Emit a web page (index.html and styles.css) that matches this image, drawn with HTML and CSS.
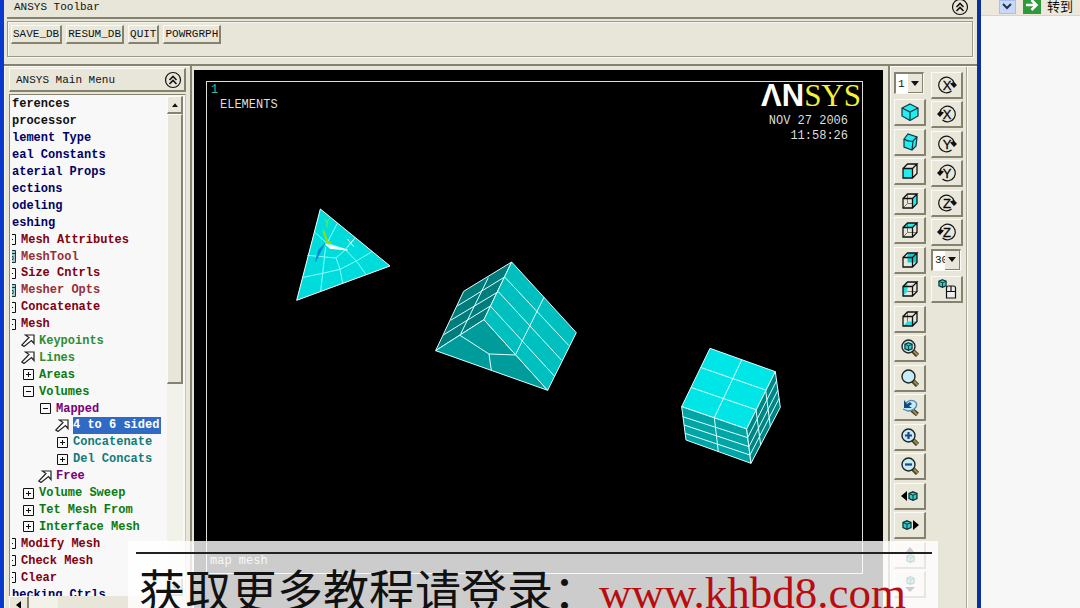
FILE: index.html
```
<!DOCTYPE html>
<html lang="zh-CN">

<head>
    <meta charset="UTF-8">
    <meta name="viewport" content="width=device-width, initial-scale=1.0">
    <title>ANSYS</title>
    <link rel="stylesheet" href="styles.css">
</head>

<body>
<svg class="defs" aria-hidden="true">
    <symbol id="chevrons" viewBox="0 0 18 18">
        <circle cx="9" cy="9" r="7.5" fill="none" stroke="#111" stroke-width="1.2"/>
        <path d="M5.5 9 9 5.5 12.5 9M5.5 13 9 9.5 12.5 13" fill="none" stroke="#111" stroke-width="1.6"/>
    </symbol>
    <symbol id="plus" viewBox="0 0 11 11">
        <path d="M.5.5h10v10H.5zM3 5.5h5M5.5 3v5" fill="none" stroke="#111"/>
    </symbol>
    <symbol id="minus" viewBox="0 0 11 11">
        <path d="M.5.5h10v10H.5zM3 5.5h5" fill="none" stroke="#111"/>
    </symbol>
    <symbol id="dialog" viewBox="0 0 11 13">
        <path d="M.5.5h10v12H.5z" fill="#9cc" stroke="#233"/>
        <path d="M1 3.5h9M3 6.5h5v3H3z" fill="#fff" stroke="#233"/>
    </symbol>
    <symbol id="pick" viewBox="0 0 14 13">
        <path d="M4.500 1h8.500v8.500l-2.500-3L3 12.500.8 11 8 3.500z" fill="#fff" stroke="#222" stroke-width="1.200"/>
    </symbol>
    <symbol id="box" viewBox="0 0 18 18">
        <path d="M2 6.5h9.5V16H2zM2 6.5 6.5 2H16l-4.500 4.500M16 2v9.500L11.500 16" fill="none" stroke="#111" stroke-width="1.3"/>
    </symbol>
    <symbol id="mini" viewBox="0 0 10 10">
        <path d="M5 .8 9 2.500v5L5 9.300 1 7.500v-5z" fill="#3cc" stroke="#133" stroke-width="1.3"/>
        <path d="M1 2.500 5 4.300l4-1.800M5 4.300v5" fill="none" stroke="#133"/>
    </symbol>
    <symbol id="lens" viewBox="0 0 18 18">
        <path d="m12 12 4.500 4.500" stroke="#443c20" stroke-width="4.500"/>
        <path d="m12.500 12 4 4" stroke="#a08c50" stroke-width="2"/>
        <circle cx="7.5" cy="7.5" r="6.500" fill="#c4ecf4" stroke="#222" stroke-width="1.4"/>
    </symbol>
    <symbol id="turn" viewBox="0 0 20 20">
        <path d="M14.500 16A7.800 7.800 0 1 1 17 8" fill="none" stroke="#111" stroke-width="1.2"/>
        <path d="M13 8.500 17 7l3 3-3 3z" fill="#111"/>
    </symbol>
    <symbol id="down" viewBox="0 0 8 5">
        <path d="M0 0h8L4 5z" fill="#111"/>
    </symbol>
</svg>

<div class="screen">
    <div class="app">
        <div class="bar">
            <span>ANSYS Toolbar</span>
            <button class="round" aria-label="收起工具栏"><svg><use href="#chevrons"/></svg></button>
        </div>
        <div class="toolbar">
            <button>SAVE_DB</button>
            <button>RESUM_DB</button>
            <button>QUIT</button>
            <button>POWRGRPH</button>
        </div>

        <div class="main">
            <div class="menu">
                <div class="menu-title">
                    <span>ANSYS Main Menu</span>
                    <button class="round" aria-label="收起菜单"><svg><use href="#chevrons"/></svg></button>
                </div>
                <div class="menu-body">
                    <ul class="tree">
                        <li class="black">ferences</li>
                        <li class="black">processor</li>
                        <li class="navy">lement Type</li>
                        <li class="navy">eal Constants</li>
                        <li class="navy">aterial Props</li>
                        <li class="navy">ections</li>
                        <li class="navy">odeling</li>
                        <li class="navy">eshing</li>
                        <li class="l2"><svg><use href="#plus"/></svg>Mesh Attributes</li>
                        <li class="l2 light"><svg><use href="#dialog"/></svg>MeshTool</li>
                        <li class="l2"><svg><use href="#plus"/></svg>Size Cntrls</li>
                        <li class="l2 light"><svg><use href="#dialog"/></svg>Mesher Opts</li>
                        <li class="l2"><svg><use href="#plus"/></svg>Concatenate</li>
                        <li class="l2"><svg><use href="#minus"/></svg>Mesh</li>
                        <li class="l3 light"><svg class="pick"><use href="#pick"/></svg>Keypoints</li>
                        <li class="l3 light"><svg class="pick"><use href="#pick"/></svg>Lines</li>
                        <li class="l3"><svg><use href="#plus"/></svg>Areas</li>
                        <li class="l3"><svg><use href="#minus"/></svg>Volumes</li>
                        <li class="l4"><svg><use href="#minus"/></svg>Mapped</li>
                        <li class="l5"><svg class="pick"><use href="#pick"/></svg><span class="selected">4 to 6 sided</span></li>
                        <li class="l5"><svg><use href="#plus"/></svg>Concatenate</li>
                        <li class="l5"><svg><use href="#plus"/></svg>Del Concats</li>
                        <li class="l4"><svg class="pick"><use href="#pick"/></svg>Free</li>
                        <li class="l3"><svg><use href="#plus"/></svg>Volume Sweep</li>
                        <li class="l3"><svg><use href="#plus"/></svg>Tet Mesh From</li>
                        <li class="l3"><svg><use href="#plus"/></svg>Interface Mesh</li>
                        <li class="l2"><svg><use href="#plus"/></svg>Modify Mesh</li>
                        <li class="l2"><svg><use href="#plus"/></svg>Check Mesh</li>
                        <li class="l2"><svg><use href="#plus"/></svg>Clear</li>
                        <li class="navy">hecking Ctrls</li>
                    </ul>
                    <div class="vscroll">
                        <button aria-label="向上"><svg class="up"><use href="#down"/></svg></button>
                        <div class="thumb"></div>
                        <button class="last" aria-label="向下"><svg><use href="#down"/></svg></button>
                    </div>
                </div>
                <div class="hscroll">
                    <button aria-label="向左"><svg viewBox="0 0 5 8"><path d="M5 0v8L0 4z"/></svg></button>
                    <div class="thumb"></div>
                </div>
            </div>

            <div class="graphics">
                <div class="frame">
                    <div class="plot-name">
                        <span class="num">1</span>
                        <span class="type">ELEMENTS</span>
                    </div>
                    <div class="stamp">
                        <div class="logo"><b>ΛN</b><i>SYS</i></div>
                        <span>NOV 27 2006</span>
                        <span>11:58:26</span>
                    </div>
                    <div class="plot-title">map mesh</div>
                    <svg class="model" viewBox="207 82 655 491" preserveAspectRatio="xMinYMin meet">
                        <!-- tetrahedron -->
                        <g transform="translate(280 190) scale(.3333)" fill="none" stroke="#dff" stroke-width="3">
                            <path d="M121 57 330 228 50 331z" fill="#00dcdc" stroke="#fff"/>
                            <path d="M106 128 141 160 202 180M172 100 141 160M226 143 195 180 168 204 82 196M195 178 229 213 257 252M278 184 229 213 180 238 128 250 70 262M168 204 180 238 188 280M137 170 128 250 122 303" stroke="#8ff"/>
                            <path d="M134 160 106 216 116 180z" fill="#08c" stroke="#0890d8"/>
                            <path d="M137 163 202 180 150 175z" fill="#fff" stroke="#fff"/>
                            <path d="M130 122 143 158 154 158" stroke="#9d0" stroke-width="6"/>
                            <path d="M134 86 141 96 149 84M141 96V112" stroke="#7e3"/>
                            <path d="M202 147 222 171M222 147 202 171"/>
                        </g>
                        <!-- prism -->
                        <g transform="translate(280 190) scale(.3333)" stroke="#dff" stroke-width="3" stroke-linejoin="round">
                            <path d="M695 216 551 304 467 482 612 389z" fill="#007c7c"/>
                            <path d="M467 482 612 389 803 601z" fill="#009b9b"/>
                            <path d="M695 216 889 428 803 601 612 389z" fill="#00bfbf"/>
                            <path d="M674 261 866 466M655 305 845 511M631 348 823 558M792 322 706 495M625 263 540 436M674 261 532 348M655 305 512 391M631 348 490 435M540 436 627 492 706 495M627 492 634 541" fill="none"/>
                        </g>
                        <!-- brick -->
                        <g transform="translate(660 330) scale(.3333)" stroke="#dff" stroke-width="3" stroke-linejoin="round">
                            <path d="M150 55 346 125 260 297 65 230z" fill="#00e6e6"/>
                            <path d="M65 230 260 297 273 400 78 330z" fill="#00a5a5"/>
                            <path d="M346 125 260 297 273 400 361 232z" fill="#008585"/>
                            <path d="M245 90 163 263 175 365M124 113 317 180 331 290M95 173 288 239 302 345M68 260 263 323 350 152M72 285 267 350 354 180M75 310 270 375 357 206" fill="none"/>
                        </g>
                    </svg>
                </div>
            </div>

            <div class="tools">
                <div class="col">
                    <div class="combo">
                        <select aria-label="窗口"><option>1</option></select>
                        <span><svg><use href="#down"/></svg></span>
                    </div>
                    <div class="views">
                        <button aria-label="Isometric"><svg viewBox="0 0 18 18"><path d="M9 1 17 5v8l-8 4.500L1 13V5z" fill="#2ee" stroke="#134" stroke-width="1.2"/><path d="M1 5 9 9l8-4M9 9v8" fill="none" stroke="#134" stroke-width="1.2"/></svg></button>
                        <button aria-label="Oblique"><svg viewBox="0 0 18 18"><path d="M3 6 7 1l9 3-1 9-4 4-8-3z" fill="#2ee" stroke="#134" stroke-width="1.2"/><path d="M3 6q4 3 9 2l4-4M12 8l-1 9" fill="none" stroke="#134" stroke-width="1.2"/></svg></button>
                        <button aria-label="Front"><svg viewBox="0 0 18 18"><path d="M2 6.500h9.500V16H2z" fill="#2ee"/><use href="#box"/></svg></button>
                        <button aria-label="Right"><svg viewBox="0 0 18 18"><path d="M11.500 6.500 16 2v9.500L11.500 16z" fill="#2ee"/><path d="M6.500 3v8.500H11M6.500 11.500 2 16" fill="none" stroke="#777"/><use href="#box"/></svg></button>
                        <button aria-label="Top"><svg viewBox="0 0 18 18"><path d="M2 6.500 6.500 2H16l-4.500 4.500z" fill="#2ee"/><path d="M6.500 3v8.500H16M6.500 11.500 2 16" fill="none" stroke="#777"/><use href="#box"/></svg></button>
                        <button aria-label="Back"><svg viewBox="0 0 18 18"><path d="M6.500 2H16v9.500H6.500z" fill="#1cc"/><use href="#box"/></svg></button>
                        <button aria-label="Left"><svg viewBox="0 0 18 18"><path d="M2 6.500 6.500 2v9.500L2 16z" fill="#2dd"/><path d="M6.500 11.500H16" stroke="#777"/><use href="#box"/></svg></button>
                        <button aria-label="Bottom"><svg viewBox="0 0 18 18"><path d="M2 16l4.500-4.500H16L11.500 16z" fill="#2dd"/><path d="M6.500 3v8.500" stroke="#777"/><use href="#box"/></svg></button>
                        <button aria-label="Fit"><svg viewBox="0 0 18 18"><use href="#lens"/><use href="#mini" x="3" y="3" width="9" height="9"/></svg></button>
                        <button aria-label="Zoom"><svg viewBox="0 0 18 18"><use href="#lens"/></svg></button>
                        <button aria-label="Zoom back"><svg viewBox="0 0 18 18"><path d="m11 12 5.500 4.500" stroke="#443c20" stroke-width="4.500"/><path d="m12 12.500 4 4" stroke="#a08c50" stroke-width="2"/><path d="M5 5Q9 1 13 3t2 6q-3 4-8 4l-5-2" fill="#c4ecf4" stroke="#58a" stroke-width="1.3"/><path d="M3 2v8h8L8 8l3-2-2-2-3 2z" fill="#124a84"/></svg></button>
                        <button aria-label="Zoom in"><svg viewBox="0 0 18 18"><use href="#lens"/><path d="M4 7.500h7M7.500 4v7" stroke="#248" stroke-width="2.2"/></svg></button>
                        <button aria-label="Zoom out"><svg viewBox="0 0 18 18"><use href="#lens"/><path d="M4 7.500h7" stroke="#248" stroke-width="2.2"/></svg></button>
                        <button aria-label="Pan left"><svg viewBox="0 0 18 18"><path d="M6 4v10L0 9z"/><use href="#mini" x="7" y="4" width="10" height="10"/></svg></button>
                        <button aria-label="Pan right"><svg viewBox="0 0 18 18"><path d="M12 4v10l6-5z"/><use href="#mini" x="1" y="4" width="10" height="10"/></svg></button>
                        <button aria-label="Pan up"><svg viewBox="0 0 18 18"><path d="M4 7h10L9 1z"/><use href="#mini" x="5" y="8" width="9" height="9"/></svg></button>
                        <button aria-label="Pan down"><svg viewBox="0 0 18 18"><path d="M4 12h10l-5 5z"/><use href="#mini" x="5" y="1" width="9" height="9"/></svg></button>
                    </div>
                </div>
                <div class="col turns">
                    <button aria-label="+X"><svg viewBox="0 0 20 20"><use href="#turn"/><text x="10" y="15">X</text></svg></button>
                    <button aria-label="-X"><svg viewBox="0 0 20 20"><use href="#turn" transform="matrix(-1 0 0 1 20 0)"/><text x="10" y="15">X</text></svg></button>
                    <button aria-label="+Y"><svg viewBox="0 0 20 20"><use href="#turn"/><text x="10" y="15">Y</text></svg></button>
                    <button aria-label="-Y"><svg viewBox="0 0 20 20"><use href="#turn" transform="matrix(-1 0 0 1 20 0)"/><text x="10" y="15">Y</text></svg></button>
                    <button aria-label="+Z"><svg viewBox="0 0 20 20"><use href="#turn"/><text x="10" y="15">Z</text></svg></button>
                    <button aria-label="-Z"><svg viewBox="0 0 20 20"><use href="#turn" transform="matrix(-1 0 0 1 20 0)"/><text x="10" y="15">Z</text></svg></button>
                    <div class="combo">
                        <select aria-label="角度"><option>30</option></select>
                        <span><svg><use href="#down"/></svg></span>
                    </div>
                    <button class="mouse" aria-label="Dynamic"><svg viewBox="0 0 20 20"><use href="#mini" x="1" y="0" width="9" height="9"/><path d="M9.500 9q0-2 2-2h5q2 0 2 2v10h-9zM9.500 12.500h9M14 7v5.500" fill="#eee" stroke="#111" stroke-width="1.2"/></svg></button>
                </div>
            </div>
        </div>
    </div>

    <div class="browser">
        <div class="address">
            <button class="drop" aria-label="地址列表"><svg viewBox="0 0 10 8"><path d="m1 1 4 4 4-4" fill="none" stroke="#235" stroke-width="2"/></svg></button>
            <button class="go"><svg viewBox="0 0 18 16"><path d="M0 0h18v16H0z" fill="#2f9a3a"/><path d="M3 7h10M8.500 2l5 5-5 5" fill="none" stroke="#fff" stroke-width="2.500"/></svg>转到</button>
        </div>
    </div>

    <div class="banner">
        <p>获取更多教程请登录：<a href="#">www.khbd8.com</a></p>
    </div>
</div>
</body>

</html>
```
FILE: styles.css
```
html,
body {
    height: 100%;
    margin: 0;
    padding: 0;
    overflow: hidden;
}

* {
    box-sizing: border-box;
}

body {
    font-family: "Liberation Mono", "Noto Sans CJK SC", monospace;
    font-size: 11px;
    color: #111;
    background: #f7f7f7;
}

button {
    margin: 0;
    padding: 0;
    font: inherit;
    color: #111;
    background: #e9e7da;
    border: 1px solid #fbfaf4;
    border-right: 2px solid #85826f;
    border-bottom: 2px solid #85826f;
}

svg {
    display: block;
    flex: none;
}

.defs {
    position: absolute;
    width: 0;
    height: 0;
}

.screen {
    position: relative;
    display: flex;
    height: 100%;
    overflow: hidden;
}

.app {
    flex: 1;
    min-width: 0;
    display: flex;
    flex-direction: column;
    background: #e8e6d9;
    border-left: 4px solid #0838cc;
    border-right: 4px solid #0a309c;
}

.bar {
    display: flex;
    align-items: center;
    justify-content: space-between;
    flex: none;
    height: 19px;
    margin: 0 4px 2px 3px;
    padding: 0 4px 3px 7px;
    border-bottom: 2px solid #85826f;
}

.round {
    width: 18px;
    height: 18px;
    border: none;
    background: none;
}

.round svg {
    width: 18px;
    height: 18px;
}

.toolbar {
    display: flex;
    align-items: flex-start;
    gap: 4px;
    flex: none;
    height: 36px;
    margin: 0 4px 7px 3px;
    padding: 3px;
    border: 1px solid #9a9887;
    box-shadow: inset 1px 1px #f8f7f0, 1px 1px #f8f7f0;
}

.toolbar button {
    height: 19px;
    padding: 0 1px;
}

.main {
    display: flex;
    flex: 1;
    min-height: 0;
    border-top: 2px solid #85826f;
}

/* left menu */
.menu {
    display: flex;
    flex-direction: column;
    flex: none;
    width: 188px;
    padding: 2px 4px 0 5px;
    border-right: 2px solid #85826f;
    box-shadow: inset 1px 1px #fbfaf4;
}

.menu-title {
    display: flex;
    align-items: center;
    justify-content: space-between;
    flex: none;
    height: 24px;
    margin-bottom: 2px;
    padding: 0 2px 0 6px;
    border: 1px solid #fbfaf4;
    border-right: 2px solid #85826f;
    border-bottom: 2px solid #85826f;
}

.menu-body {
    display: flex;
    flex: 1;
    min-height: 0;
    padding: 1px 2px 0;
    border-top: 1px solid #85826f;
    border-left: 1px solid #85826f;
    border-right: 1px solid #c8c5b4;
    background: #f8f8f8;
    overflow: hidden;
}

.tree {
    display: grid;
    grid-template-rows: repeat(30, 1fr);
    flex: 1;
    height: 507px;
    margin: 0;
    padding: 0;
    list-style: none;
    font-size: 12px;
    font-weight: bold;
    color: #800010;
    overflow: hidden;
}

.tree li {
    display: flex;
    align-items: center;
    gap: 5px;
    white-space: pre;
}

.tree svg {
    width: 11px;
    height: 11px;
}

.tree .l2 svg {
    margin-left: -7px;
}

.tree .l2.light svg {
    height: 13px;
}

.tree svg.pick {
    width: 14px;
    height: 13px;
    margin: 0 -1px 0 -2px;
}

.tree .black {
    color: #111;
}

.tree .navy {
    color: #000064;
}

.tree .l2.light {
    color: #963038;
}

.tree .l3 {
    padding-left: 11px;
    color: #0a7a10;
}

.tree .l3.light {
    color: #2f8c34;
}

.tree .l4 {
    padding-left: 28px;
    color: #780078;
}

.tree .l5 {
    padding-left: 45px;
    color: #107c7c;
}

.tree .selected {
    padding-right: 2px;
    line-height: 17px;
    color: #fff;
    background: #316ac5;
}

.vscroll {
    display: flex;
    flex-direction: column;
    flex: none;
    width: 16px;
    background: #f3f2ea;
}

.vscroll button,
.hscroll button {
    display: flex;
    align-items: center;
    justify-content: center;
    flex: none;
    width: 16px;
    height: 18px;
}

.vscroll svg {
    width: 6px;
    height: 4px;
}

.up {
    transform: rotate(180deg);
}

.vscroll .thumb {
    flex: 0 0 54%;
    border: 1px solid #fbfaf4;
    border-right: 2px solid #85826f;
    border-bottom: 2px solid #85826f;
    background: #e8e6d9;
}

.vscroll .last {
    margin-top: auto;
}

.hscroll {
    display: flex;
    flex: none;
    gap: 29px;
    height: 12px;
    background: #f3f2ea;
}

.hscroll button {
    width: 20px;
}

.hscroll svg {
    width: 5px;
    height: 8px;
}

.hscroll .thumb {
    flex: 1;
    background: #e8e6d9;
}

/* graphics window */
.graphics {
    flex: 1;
    min-width: 0;
    margin: 4px 5px 0 2px;
    padding: 11px 20px 34px 12px;
    background: #000;
}

.frame {
    position: relative;
    display: grid;
    grid-template-columns: 1fr auto;
    grid-template-rows: 1fr auto;
    height: 100%;
    border: 1px solid #ddd;
    font-size: 12px;
    line-height: 15px;
    color: #ddd;
}

.plot-name {
    display: flex;
    flex-direction: column;
    padding: 1px 4px;
}

.num {
    color: #3fb8a0;
}

.type {
    padding-left: 9px;
}

.stamp {
    display: flex;
    flex-direction: column;
    align-items: flex-end;
    padding-right: 14px;
}

.logo {
    display: flex;
    align-items: baseline;
    margin-right: -13px;
    height: 32px;
    color: #fff;
}

.logo b {
    font: bold 31px/28px "Liberation Sans", sans-serif;
}

.logo i {
    font: normal 31px/28px "Liberation Serif", serif;
    color: #f4f03c;
}

.plot-title {
    padding: 0 3px 4px;
}

.model {
    position: absolute;
    top: 0;
    left: 0;
    width: 100%;
    height: 100%;
}

/* view buttons */
.tools {
    display: flex;
    align-items: flex-start;
    gap: 5px;
    flex: none;
    width: 89px;
    padding: 6px 11px 0 4px;
    border-left: 2px solid #85826f;
    background: linear-gradient(to right, transparent 76px, #aaa898 76px, #aaa898 77px, #fbfaf4 77px, #fbfaf4 78px, transparent 78px);
    box-shadow: inset 1px 1px #fbfaf4;
}

.col {
    display: flex;
    flex-direction: column;
    flex: none;
    width: 32px;
}

.views,
.turns {
    display: flex;
    flex-direction: column;
    justify-content: space-between;
}

.views {
    height: 499px;
    margin-top: 5px;
}

.turns {
    height: 231px;
}

.tools button {
    display: flex;
    align-items: center;
    justify-content: center;
    flex: none;
    width: 32px;
    height: 27px;
}

.tools .mouse {
    margin-top: 3px;
}

.tools button svg {
    width: 18px;
    height: 18px;
}

.turns button svg {
    width: 20px;
    height: 20px;
}

.turns text {
    font: 13px "Liberation Sans", sans-serif;
    text-anchor: middle;
    stroke: #111;
    stroke-width: .3;
}

.combo {
    display: flex;
    flex: none;
    width: 30px;
    height: 22px;
    border: 2px solid #85826f;
    border-right: 1px solid #fbfaf4;
    border-bottom: 1px solid #fbfaf4;
}

.combo select {
    appearance: none;
    width: 12px;
    padding: 0 0 0 2px;
    border: none;
    border-radius: 0;
    font: 11px "Liberation Mono", monospace;
    color: #111;
    background: #fff;
    overflow: hidden;
    text-overflow: clip;
}

.combo span {
    display: flex;
    align-items: center;
    justify-content: center;
    flex: 1;
    border-right: 1px solid #85826f;
    border-bottom: 1px solid #85826f;
}

.combo svg {
    width: 8px;
    height: 5px;
}

/* browser behind the window */
.browser {
    flex: none;
    width: 99px;
}

.address {
    display: flex;
    align-items: flex-start;
    justify-content: flex-end;
    gap: 7px;
    height: 16px;
    padding-right: 7px;
    background: #ece9dc;
    border-bottom: 1px solid #d8d5c6;
}

.address .drop {
    display: flex;
    align-items: center;
    justify-content: center;
    width: 17px;
    height: 14px;
    border: 1px solid #a8c0e8;
    background: #c8d8fa;
}

.drop svg {
    width: 10px;
    height: 8px;
}

.go {
    display: flex;
    align-items: center;
    gap: 6px;
    height: 14px;
    border: none;
    background: none;
    font: 13px/10px "Noto Sans CJK SC", sans-serif;
}

.address .go {
    border: none;
    background: none;
    padding-bottom: 2px;
}

.go svg {
    width: 18px;
    height: 16px;
}

/* caption over the bottom of the screen */
.banner {
    position: absolute;
    left: 128px;
    right: 142px;
    bottom: 0;
    height: 67px;
    padding: 11px 6px 0 8px;
    background: rgba(255, 255, 255, .8);
    overflow: hidden;
}

.banner p {
    margin: 0;
    padding-left: 3px;
    border-top: 2px solid #222;
    font: 46px/68px "Noto Sans CJK SC", sans-serif;
    white-space: nowrap;
    color: #111;
}

.banner a {
    font-family: "Liberation Serif", serif;
    font-size: 45px;
    color: #b80c10;
    text-decoration: none;
}
```
